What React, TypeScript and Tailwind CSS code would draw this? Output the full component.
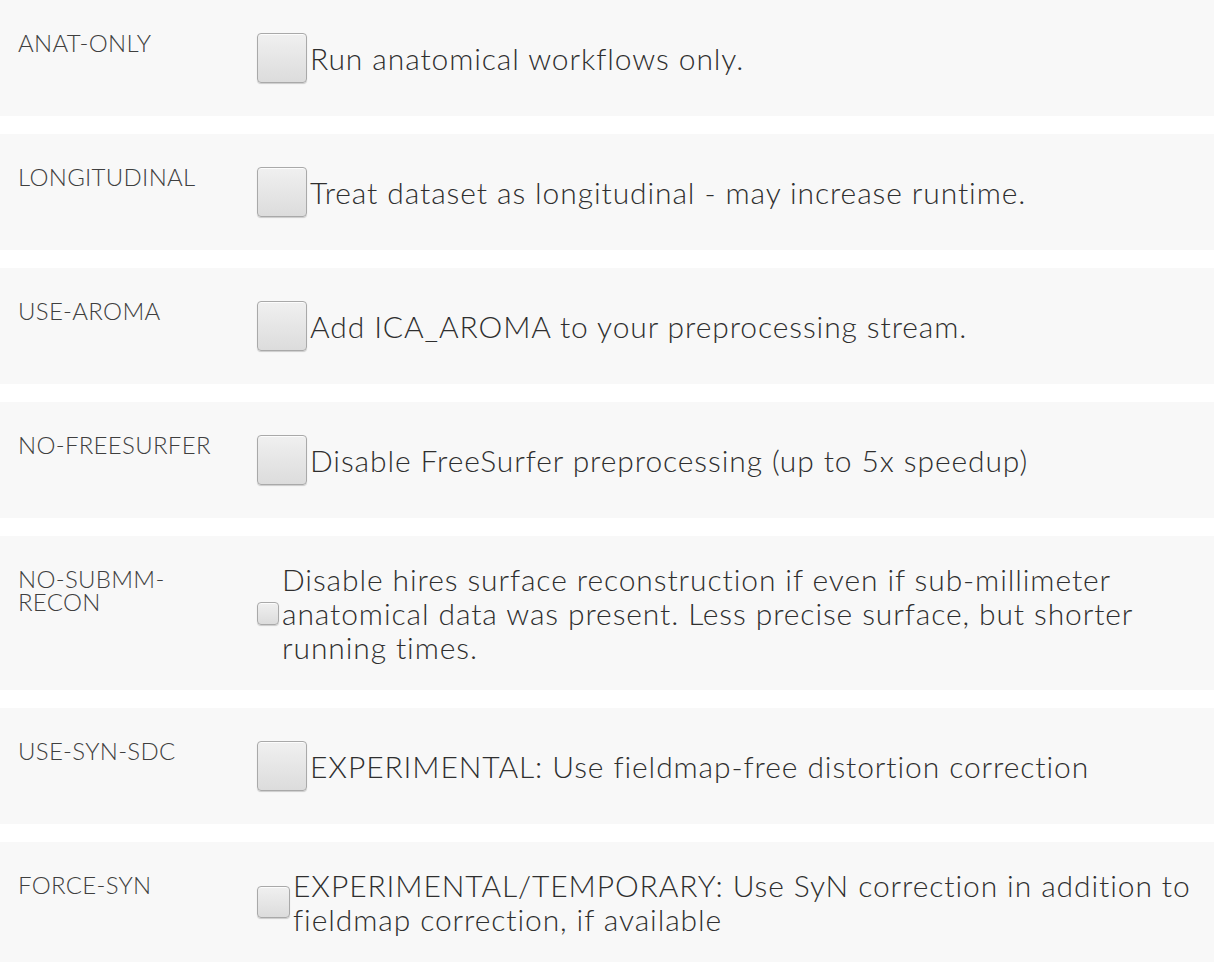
import React from 'react';

type Option = {
  flag: string;
  help: string;
  box: string;
};

const OPTIONS: Option[] = [
  { flag: 'ANAT-ONLY', help: 'Run anatomical workflows only.', box: 'w-[50px] h-[50px]' },
  { flag: 'LONGITUDINAL', help: 'Treat dataset as longitudinal - may increase runtime.', box: 'w-[50px] h-[50px]' },
  { flag: 'USE-AROMA', help: 'Add ICA_AROMA to your preprocessing stream.', box: 'w-[50px] h-[50px]' },
  { flag: 'NO-FREESURFER', help: 'Disable FreeSurfer preprocessing (up to 5x speedup)', box: 'w-[50px] h-[50px]' },
  {
    flag: 'NO-SUBMM-RECON',
    help: 'Disable hires surface reconstruction if even if sub-millimeter anatomical data was present. Less precise surface, but shorter running times.',
    box: 'w-[22px] h-[23px]',
  },
  { flag: 'USE-SYN-SDC', help: 'EXPERIMENTAL: Use fieldmap-free distortion correction', box: 'w-[50px] h-[50px]' },
  {
    flag: 'FORCE-SYN',
    help: 'EXPERIMENTAL/TEMPORARY: Use SyN correction in addition to fieldmap correction, if available',
    box: 'w-[33px] h-[32px]',
  },
];

const Checkbox: React.FC<{ size: string }> = ({ size }) => (
  <div
    className={`${size} shrink-0 rounded-[4px] border border-[#a9a9a9] bg-gradient-to-b from-[#f0f0f0] to-[#dcdcdc] shadow-[0_1px_1px_rgba(0,0,0,0.18),inset_0_1px_0_rgba(255,255,255,0.8)]`}
  />
);

const OptionRow: React.FC<{ option: Option }> = ({ option }) => (
  <div className="flex bg-[#f8f8f8] py-[26px] pl-[18px] pr-[10px]">
    <div className="w-[210px] shrink-0 pt-[5px] text-[24px] font-light leading-[23px] tracking-[0.3px] text-[#3f3f3f]">
      {option.flag}
    </div>
    <div className="ml-[29px] flex min-h-[64px] flex-1 items-center gap-[3px]">
      <Checkbox size={option.box} />
      <p className="text-[30px] font-light leading-[34px] tracking-[0.9px] text-[#2f2f2f]">{option.help}</p>
    </div>
  </div>
);

export default function App() {
  return (
    <div className="flex min-h-screen flex-col gap-[18px] bg-white font-['Lato',sans-serif] [font-variant-ligatures:none]">
      {OPTIONS.map((o) => (
        <OptionRow key={o.flag} option={o} />
      ))}
    </div>
  );
}
